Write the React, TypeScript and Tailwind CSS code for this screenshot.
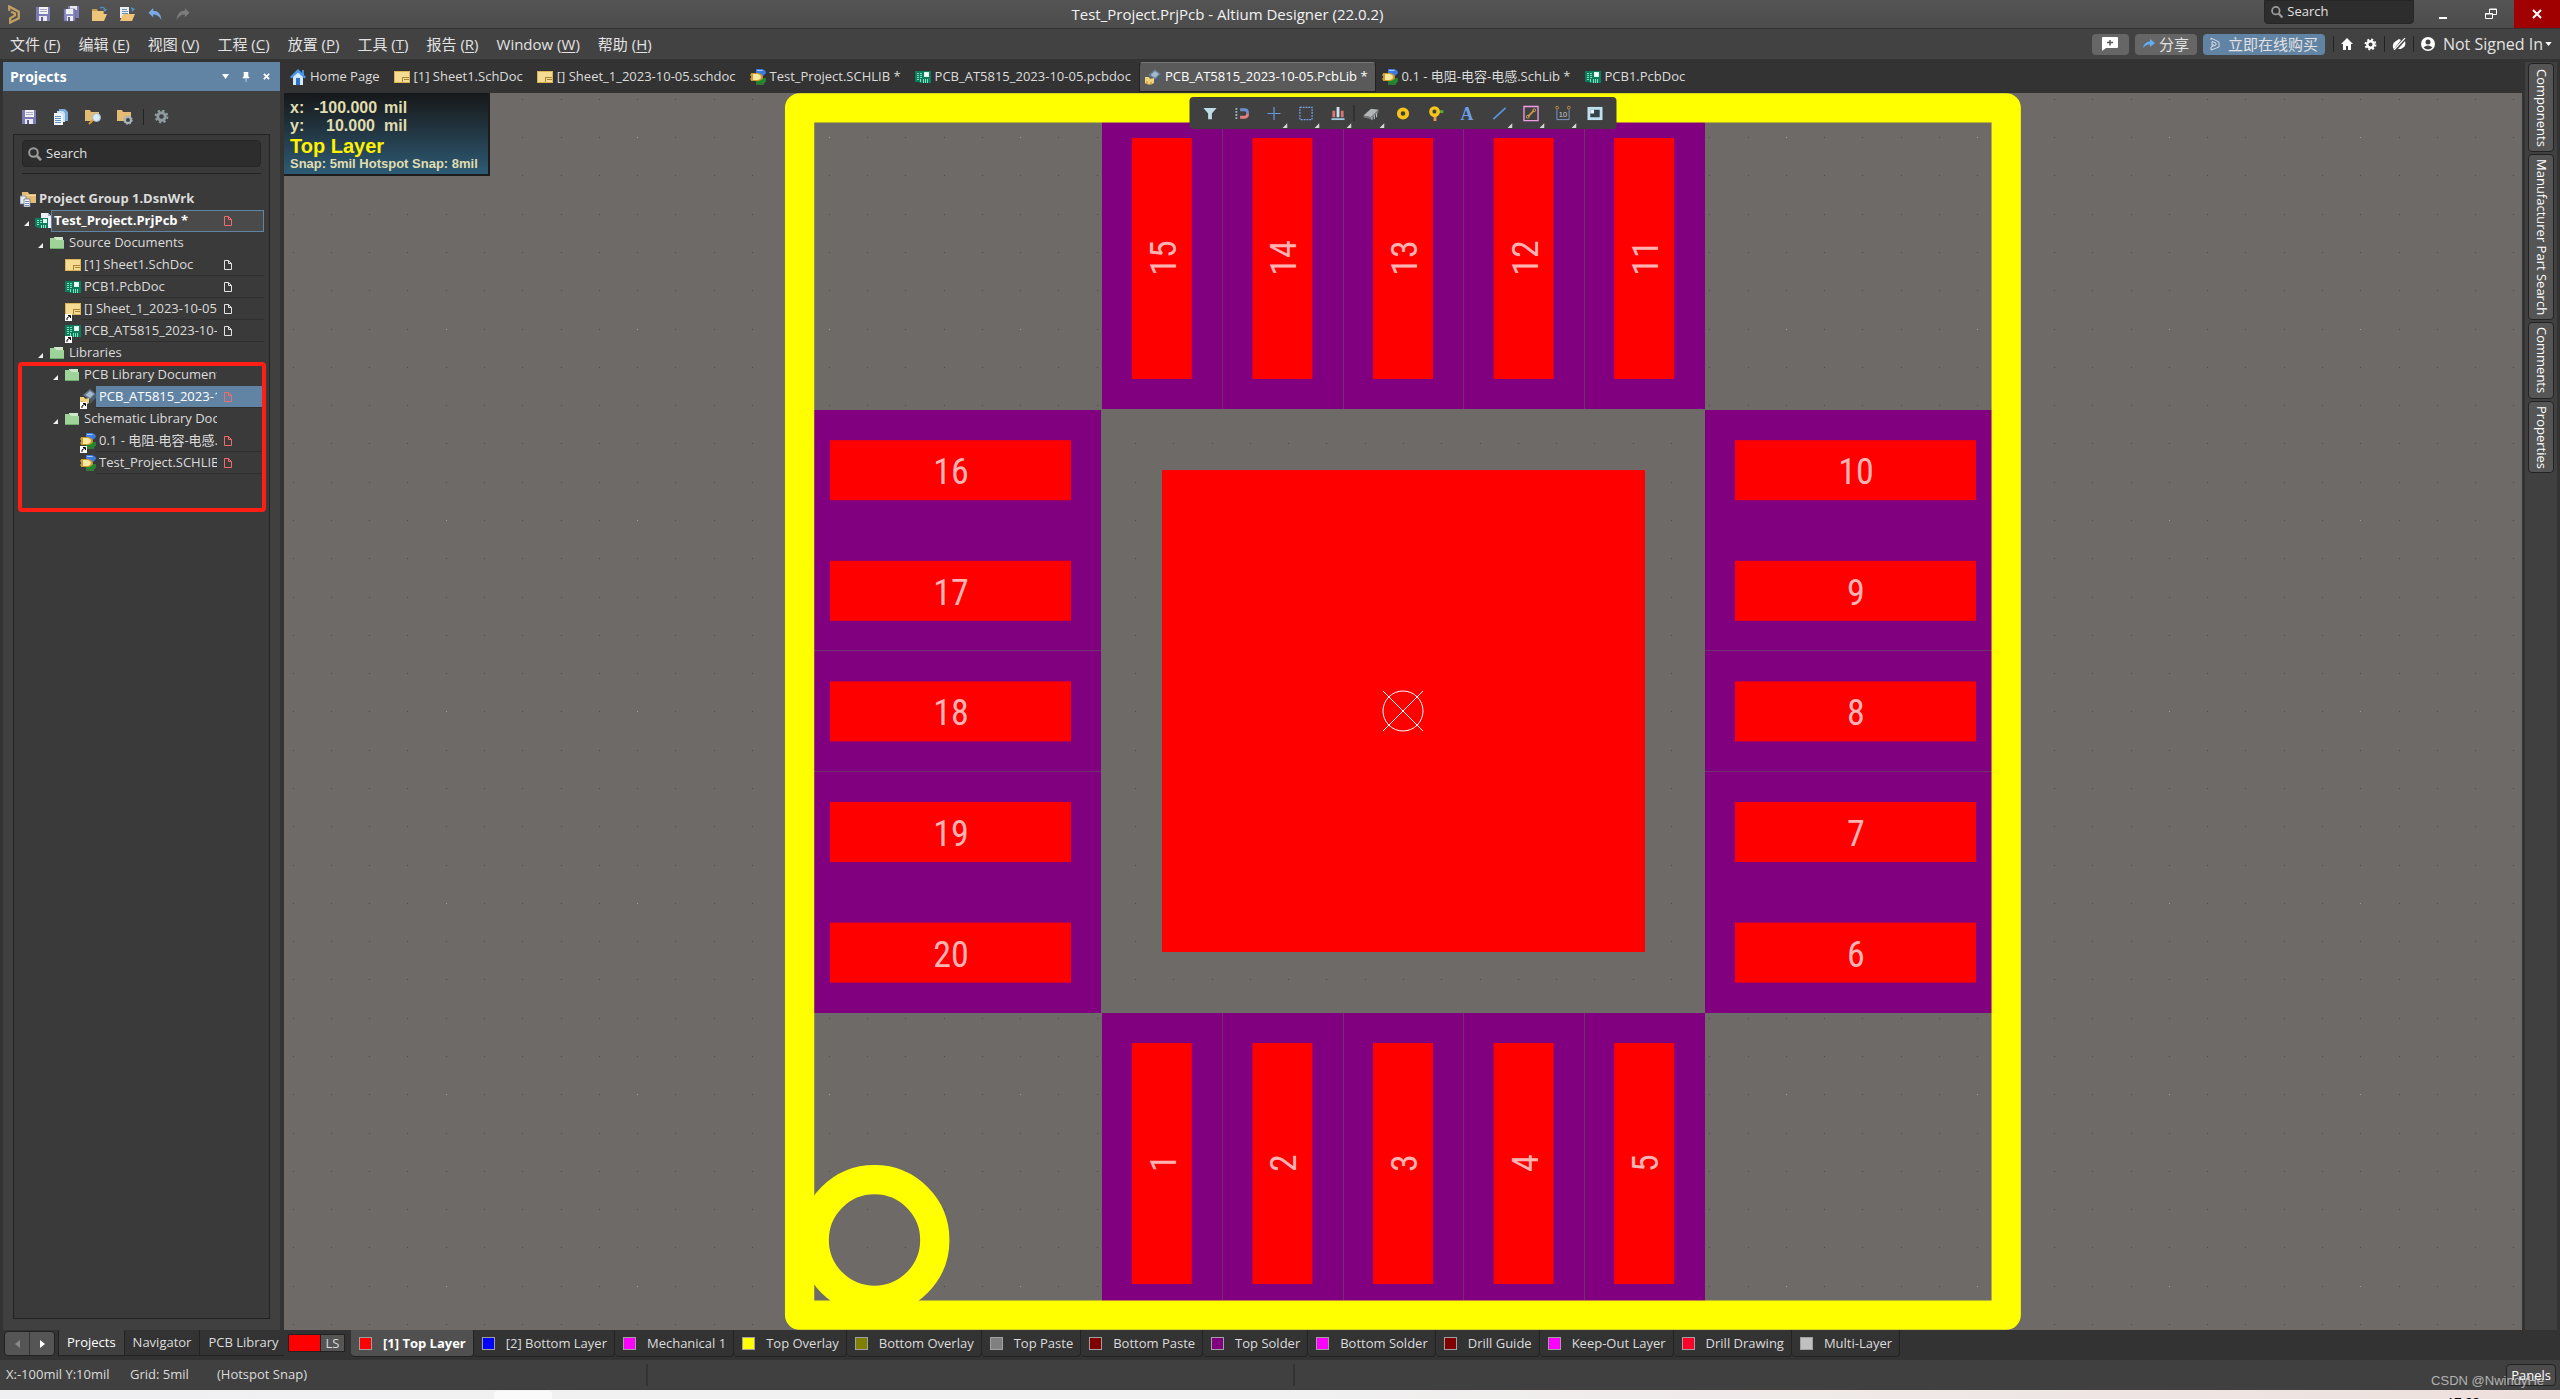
import React from 'react';

interface IconProps {
  className?: string;
}

type DocKind = 'home' | 'sch' | 'pcb' | 'pcblib' | 'schlib';

const FONT = "font-['Open_Sans','Noto_Sans_CJK_SC',sans-serif]";

/* ---------- icons ---------- */

const LogoIcon: React.FC<IconProps> = ({ className }) => (
  <svg viewBox="0 0 14 20" className={className} fill="none" stroke="#c3a062" strokeWidth="2.4">
    <path d="M2 6V1.500L12 7v7L3 18.500V14l5-3V9L4 7" />
  </svg>
);

const SaveIcon: React.FC<IconProps> = ({ className }) => (
  <svg viewBox="0 0 16 16" className={className}>
    <path d="M1 1h14v14H1z" fill="#7d7bb5" />
    <path d="M4 1h9v7H4z" fill="#f1f1f4" />
    <path d="M5 3h7v1H5zM5 5h7v1H5z" fill="#a6a8bd" />
    <path d="M4 10h8v5H4z" fill="#e8e8ee" />
    <path d="M6 11h2v4H6z" fill="#5c5a93" />
  </svg>
);

const SaveAllIcon: React.FC<IconProps> = ({ className }) => (
  <svg viewBox="0 0 16 16" className={className}>
    <path d="M5 0h11v12H5z" fill="#7d7bb5" />
    <path d="M7 0h7v4H7z" fill="#e8e8ee" />
    <path d="M1 3h11v12H1z" fill="#908ec6" stroke="#5c5a93" strokeWidth=".6" />
    <path d="M3 3h7v5H3zM4 10h6v5H4z" fill="#f1f1f4" />
    <path d="M5 11h2v4H5z" fill="#5c5a93" />
  </svg>
);

const OpenIcon: React.FC<IconProps> = ({ className }) => (
  <svg viewBox="0 0 16 16" className={className}>
    <path d="M1 3h5l1 2h6v3H1z" fill="#c99b4e" />
    <path d="M1 15V5h11v3h4l-3 7z" fill="#eec67a" />
    <path d="M9 2q4-2 5 2" fill="none" stroke="#4f93c4" strokeWidth="1.3" />
    <path d="M12 3l4 0-2 3z" fill="#4f93c4" />
  </svg>
);

const OpenDocsIcon: React.FC<IconProps> = ({ className }) => (
  <svg viewBox="0 0 16 16" className={className}>
    <path d="M1 1h9v11H1z" fill="#e9eef2" />
    <path d="M3 3h5v1H3zM3 5h6v1H3zM3 7h6v1H3z" fill="#6b93b4" />
    <path d="M1 15l3-7h12l-3 7z" fill="#f1c378" />
    <path d="M12 1l4 2-3 3z" fill="#4f93c4" />
  </svg>
);

const UndoIcon: React.FC<IconProps> = ({ className }) => (
  <svg viewBox="0 0 16 14" className={className}>
    <path d="M6 0v3q8 0 9 10-3-6-9-6v3L1 5z" fill="#7aa9e6" />
  </svg>
);

const RedoIcon: React.FC<IconProps> = ({ className }) => (
  <svg viewBox="0 0 16 14" className={className}>
    <path d="M10 0v3Q2 3 1 13q3-6 9-6v3l5-5z" fill="#7c7c7c" />
  </svg>
);

const HomeDocIcon: React.FC<IconProps> = ({ className }) => (
  <svg viewBox="0 0 16 16" className={className}>
    <path d="M3 7v9h10V7L8 3z" fill="#d5e9fb" />
    <path d="M12 1h2v5h-2z" fill="#3f8fe0" />
    <path d="M0 8l8-8 8 8-1.500 1.500L8 3.500 1.500 9.500z" fill="#4a9bf0" />
    <path d="M6 9h4v7H6z" fill="#2a74c4" />
  </svg>
);

const SchDocIcon: React.FC<IconProps> = ({ className }) => (
  <svg viewBox="0 0 16 16" className={className}>
    <path d="M0 2h16v12H0z" fill="#d9b557" />
    <path d="M1 3h14v10H1z" fill="#f5dc92" />
    <path d="M8 8h7v1H9v4H8z" fill="#a8842f" />
    <path d="M10 10h5v1h-5z" fill="#a8842f" />
  </svg>
);

const PcbDocIcon: React.FC<IconProps> = ({ className }) => (
  <svg viewBox="0 0 16 16" className={className}>
    <path d="M0 2h16v12H5l-1-1H0z" fill="#0f7d5c" />
    <path d="M9 3h5v5H9z" fill="#d8f3e8" />
    <path d="M10 4h3v3h-3z" fill="#f4fffa" />
    <path d="M2 4h2v1H2zM5 4h2v1H5zM2 6h2v1H2zM5 6h2v1H5zM2 8h2v1H2zM5 8h2v1H5zM2 10h2v1H2zM8 10h1v4H8zM10 10h1v4h-1zM12 10h1v4h-1zM5 10h1v3H5z" fill="#7fe0bd" />
  </svg>
);

const PcbLibIcon: React.FC<IconProps> = ({ className }) => (
  <svg viewBox="0 0 16 16" className={className}>
    <path d="M3 6l7-6 6 5-6 6z" fill="#61768a" />
    <path d="M5.500 6l4.500-4 4 3-4 4z" fill="#a3b8ca" />
    <path d="M10 11l6-6v4l-6 6z" fill="#4a5c6d" />
    <path d="M0 8h4q0 3 5 1v5q-5 3-9 0z" fill="#f0d27a" />
    <path d="M2 12v3M6 13v3" stroke="#b98c2a" />
  </svg>
);

const SchLibIcon: React.FC<IconProps> = ({ className }) => (
  <svg viewBox="0 0 16 16" className={className}>
    <path d="M6 9h9v5H6z" fill="#1f8a2b" />
    <path d="M7 14v2M9 14v2M11 14v2M13 14v2M15 10h1M15 12h1" stroke="#32b53f" />
    <path d="M6 0h6q4 1 4 4l-3 3H6z" fill="#3d7be0" />
    <path d="M7 1h4q2 0 2 1H7z" fill="#a9c9f7" />
    <path d="M1 4h7q5 1 5 4t-5 4H1z" fill="#c99b2f" />
    <path d="M3 5h5q3 1 3 3t-3 3H3z" fill="#fbe6a0" />
    <path d="M0 6h2M0 10h2" stroke="#d8b040" />
  </svg>
);

const FolderIcon: React.FC<IconProps> = ({ className }) => (
  <svg viewBox="0 0 14 12" className={className}>
    <path d="M4 0h9v3H4z" fill="#cfe8c8" />
    <path d="M0 1h5l1 2h8v9H0z" fill="#9ed49a" />
    <path d="M0 11h14v1H0z" fill="#6fae6c" />
  </svg>
);

const GroupIcon: React.FC<IconProps> = ({ className }) => (
  <svg viewBox="0 0 16 16" className={className}>
    <path d="M2 1h6l1 2h7v9H2z" fill="#e3bb73" />
    <path d="M2 4h14v1H2z" fill="#f6dba2" />
    <path d="M0 5h6v8H0z" fill="#e4e9f1" stroke="#6f7f98" strokeWidth=".8" />
    <path d="M4 8h6v8H4z" fill="#f4f6fa" stroke="#6f7f98" strokeWidth=".8" />
    <path d="M5 10h4v1H5zM5 12h4v1H5zM5 14h4v1H5z" fill="#6f8fb8" />
  </svg>
);

const ProjectIcon: React.FC<IconProps> = ({ className }) => (
  <svg viewBox="0 0 16 16" className={className}>
    <path d="M6 0h7l3 3v12H6z" fill="#eceff5" />
    <path d="M13 0v3h3z" fill="#a9b2c4" />
    <path d="M0 5h13v10H3l-1-1H0z" fill="#0f7d5c" />
    <path d="M8 6h4v4H8z" fill="#e6fff5" />
    <path d="M2 7h2v1H2zM5 7h2v1H5zM2 9h2v1H2zM5 9h2v1H5zM2 11h2v1H2zM6 12h1v3H6zM8 12h1v3H8zM10 12h1v3h-1z" fill="#8fe8c8" />
  </svg>
);

const DocFlag: React.FC<{ modified?: boolean }> = ({ modified }) => (
  <svg viewBox="0 0 8 10" className={`h-[10px] w-2 shrink-0 ${modified ? 'text-[#f26a6a]' : 'text-[#e4e4e4]'}`} fill="none" stroke="currentColor">
    <path d="M.5.5h4l3 3v6h-7zM4.500.5v3h3" />
  </svg>
);

const SearchIcon: React.FC<IconProps> = ({ className }) => (
  <svg viewBox="0 0 14 14" className={className} fill="none" stroke="#9b9b9b" strokeWidth="2">
    <circle cx="5.500" cy="5.500" r="4.300" />
    <path d="M9 9l4 4.200" strokeWidth="2.600" />
  </svg>
);

const GearIcon: React.FC<IconProps> = ({ className }) => (
  <svg viewBox="0 0 16 16" className={className} fill="none" stroke="currentColor">
    <circle cx="8" cy="8" r="4" strokeWidth="3" />
    <circle cx="8" cy="8" r="6.200" strokeWidth="2.200" strokeDasharray="2.500 2.370" />
  </svg>
);

const docIcons: Record<DocKind, React.FC<IconProps>> = {
  home: HomeDocIcon,
  sch: SchDocIcon,
  pcb: PcbDocIcon,
  pcblib: PcbLibIcon,
  schlib: SchLibIcon,
};

/* ---------- title bar and menu ---------- */

const TitleBar = () => (
  <header className="flex h-[29px] shrink-0 items-stretch border-b border-[#333] bg-gradient-to-b from-[#545454] to-[#4c4c4c]">
    <div className="flex items-center pl-[7px]">
      <LogoIcon className="h-[19px] w-[14px]" />
      <div className="ml-[14px] flex items-center gap-3">
        <button aria-label="Save"><SaveIcon className="size-4" /></button>
        <button aria-label="Save all"><SaveAllIcon className="size-4" /></button>
        <button aria-label="Open"><OpenIcon className="size-4" /></button>
        <button aria-label="Open document"><OpenDocsIcon className="size-4" /></button>
        <button aria-label="Undo"><UndoIcon className="h-[13px] w-4" /></button>
        <button aria-label="Redo"><RedoIcon className="h-[13px] w-4" /></button>
      </div>
    </div>
    <h1 className="flex-1 self-center text-center text-[15px] text-[#f2f2f2]">Test_Project.PrjPcb - Altium Designer (22.0.2)</h1>
    <label className="flex h-6 w-[150px] items-center gap-1 rounded-b border border-[#262626] bg-[#2d2d2d] px-1.5">
      <SearchIcon className="size-[14px]" />
      <input aria-label="Search" placeholder="Search" className="w-full bg-transparent text-[13px] text-[#e0e0e0] outline-none placeholder:text-[#e0e0e0]" />
    </label>
    <button aria-label="Minimize" className="ml-1 flex w-[50px] items-center justify-center">
      <svg viewBox="0 0 8 8" className="mt-2 size-2"><path d="M0 3h8v2H0z" fill="#fff" /></svg>
    </button>
    <button aria-label="Restore" className="flex w-[46px] items-center justify-center">
      <svg viewBox="0 0 12 12" className="size-3" fill="none" stroke="#fff"><path d="M4.500 5V1h7v5.500H8M4 1.500h8M.5 5.500h7v5h-7zM0 6h8" /></svg>
    </button>
    <button aria-label="Close" className="flex w-[46px] items-center justify-center bg-[#a00000]">
      <svg viewBox="0 0 10 10" className="size-[10px]" stroke="#fff" strokeWidth="2"><path d="M1 1l8 8M9 1L1 9" /></svg>
    </button>
  </header>
);

const menus = [
  ['文件', 'F'],
  ['编辑', 'E'],
  ['视图', 'V'],
  ['工程', 'C'],
  ['放置', 'P'],
  ['工具', 'T'],
  ['报告', 'R'],
  ['Window', 'W'],
  ['帮助', 'H'],
];

const Divider = () => <span className="h-4 w-px bg-[#222]" />;

const MenuBar = () => (
  <div className="flex h-[30px] shrink-0 items-center justify-between bg-[#424242] text-[15px] text-[#e2e2e2]">
    <nav className="flex gap-[18px] pl-[10px]">
      {menus.map(([label, key]) => (
        <button key={key}>{label} (<u className="underline-offset-2">{key}</u>)</button>
      ))}
    </nav>
    <div className="flex items-center pr-2">
      <button aria-label="Comment" className="flex h-[21px] w-[37px] items-center justify-center rounded-sm bg-[#666]">
        <svg viewBox="0 0 16 14" className="h-[14px] w-4"><path d="M1 0h14q1 0 1 1v9q0 1-1 1H4l-4 3V1q0-1 1-1z" fill="#fff" /><path d="M8 3v5.500M5 5.500h6" stroke="#555" strokeWidth="1.500" /></svg>
      </button>
      <button className="ml-1.5 flex h-[21px] w-[62px] items-center justify-center gap-1 rounded-sm bg-[#666]">
        <svg viewBox="0 0 12 10" className="h-[10px] w-3"><path d="M7 0l5 4-5 4V5.500Q3 5 0 9q1-6 7-6.500z" fill="#62aef5" /></svg>
        分享
      </button>
      <button className="ml-1.5 flex h-[21px] w-[122px] items-center justify-center gap-2 rounded-sm bg-[#6284a4]">
        <svg viewBox="0 0 10 14" className="h-[14px] w-[10px]" fill="none" stroke="#d6dde4"><path d="M1 3V1l8 4v5l-8 3v-3l5-2V6L2 4.500v4l2-1" /></svg>
        立即在线购买
      </button>
      <div className="flex items-center gap-[7px] pl-2 text-white">
        <Divider />
        <svg viewBox="0 0 12 12" className="size-3" fill="currentColor"><path d="M6 0l6 6h-2v6H7V8H5v4H2V6H0z" /></svg>
        <GearIcon className="ml-1 size-[13px]" />
        <Divider />
        <svg viewBox="0 0 14 12" className="h-3 w-[14px]"><path d="M1 10Q0 5 4 3l3-2 2 1-7 9z" fill="#fff" /><path d="M13 0L2 12" stroke="#fff" strokeWidth="1.200" /><path d="M6 11l7-8q1 4-1 6l-3 2z" fill="#fff" /></svg>
        <Divider />
        <svg viewBox="0 0 14 14" className="size-[14px]"><circle cx="7" cy="7" r="7" fill="#fff" /><circle cx="7" cy="5" r="2.500" fill="#424242" /><path d="M2.500 10.500q4.500-4 9 0-4.500 4-9 0z" fill="#424242" /></svg>
      </div>
      <button className="ml-2 flex items-center gap-0.5 text-base text-[#e2e2e2]">
        Not Signed In
        <svg viewBox="0 0 8 5" className="h-1 w-[7px]"><path d="M0 0h8L4 5z" fill="#fff" /></svg>
      </button>
    </div>
  </div>
);

/* ---------- projects panel ---------- */

interface TreeItem {
  label: string;
  kind: DocKind | 'folder';
  depth: 0 | 1 | 2;
  flag?: 'saved' | 'modified';
  linked?: boolean;
  selected?: boolean;
}

const treeItems: TreeItem[] = [
  { label: 'Source Documents', kind: 'folder', depth: 0 },
  { label: '[1] Sheet1.SchDoc', kind: 'sch', depth: 1, flag: 'saved' },
  { label: 'PCB1.PcbDoc', kind: 'pcb', depth: 1, flag: 'saved' },
  { label: '[] Sheet_1_2023-10-05.schdoc', kind: 'sch', depth: 1, flag: 'saved', linked: true },
  { label: 'PCB_AT5815_2023-10-05.pcbdoc', kind: 'pcb', depth: 1, flag: 'saved', linked: true },
  { label: 'Libraries', kind: 'folder', depth: 0 },
  { label: 'PCB Library Documents', kind: 'folder', depth: 1 },
  { label: 'PCB_AT5815_2023-10-05.PcbLib', kind: 'pcblib', depth: 2, flag: 'modified', linked: true, selected: true },
  { label: 'Schematic Library Documents', kind: 'folder', depth: 1 },
  { label: '0.1 - 电阻-电容-电感.SchLib', kind: 'schlib', depth: 2, flag: 'modified', linked: true },
  { label: 'Test_Project.SCHLIB', kind: 'schlib', depth: 2, flag: 'modified' },
];

const indent = ['pl-6', 'pl-[39px]', 'pl-[54px]'];

const Expander = () => (
  <svg viewBox="0 0 5 5" className="mt-1 size-[5px] shrink-0"><path d="M5 0v5H0z" fill="#eee" /></svg>
);

const TreeRow: React.FC<{ item: TreeItem }> = ({ item }) => {
  const Icon = item.kind === 'folder' ? FolderIcon : docIcons[item.kind];
  return (
    <li className={`flex h-[22px] items-center pr-[5px] ${indent[item.depth]}`}>
      <span className="flex w-3 shrink-0 items-center">{item.kind === 'folder' && <Expander />}</span>
      <span className="relative shrink-0">
        <Icon className={item.kind === 'folder' ? 'mr-0.5 h-3 w-[14px]' : 'size-4'} />
        {item.linked && (
          <svg viewBox="0 0 7 7" className="absolute -bottom-1 left-0 size-[7px]"><path d="M0 0h7v7H0z" fill="#fff" /><path d="M2 6V4l3-2M3 1.500h2.500V4" stroke="#000" fill="none" /></svg>
        )}
      </span>
      <button
        className={`flex h-full min-w-0 flex-1 items-center gap-[7px] pl-[3px] pr-8 text-left ${item.selected ? 'bg-[#6284a4] text-white' : ''} ${item.flag ? 'border-b border-[#2f2f2f]' : ''}`}
      >
        <span className="min-w-0 flex-1 overflow-hidden whitespace-nowrap">{item.label}</span>
        <span className="w-2 shrink-0">{item.flag && <DocFlag modified={item.flag === 'modified'} />}</span>
      </button>
    </li>
  );
};

const ProjectsPanel = () => (
  <aside className="flex w-[284px] shrink-0 flex-col pl-[3px] pr-1 pt-[3px]">
    <div className="flex h-[29px] shrink-0 items-center bg-[#6284a4] pl-[7px] pr-[10px] text-white">
      <h2 className="flex-1 text-sm font-bold">Projects</h2>
      <div className="flex items-center gap-[13px]">
        <svg viewBox="0 0 7 5" className="h-[5px] w-[7px]"><path d="M0 0h7L3.500 5z" fill="#fff" /></svg>
        <svg viewBox="0 0 8 10" className="h-[10px] w-2"><path d="M2 0h4v5h1v1H1V5h1zM4 6v4" fill="#fff" stroke="#fff" strokeWidth=".6" /></svg>
        <svg viewBox="0 0 8 8" className="size-[7px]" stroke="#fff" strokeWidth="2"><path d="M1 1l6 6M7 1L1 7" /></svg>
      </div>
    </div>
    <div className="flex min-h-0 flex-1 flex-col bg-[#404040] px-[10px] pb-[11px]">
      <div className="flex h-[43px] shrink-0 items-center pl-2 pt-2">
        <button aria-label="Save" className="mr-4"><SaveIcon className="size-4" /></button>
        <button aria-label="Copy documents" className="mr-4">
          <svg viewBox="0 0 16 16" className="size-4"><path d="M6 0h6l3 3v9H6z" fill="#79a9d8" /><path d="M4 2h6l2 2v9H4z" fill="#c8dff2" /><path d="M1 4h7l2 2v10H1z" fill="#f1f6fb" /><path d="M2 7h6v1H2zM2 9h6v1H2zM2 11h6v1H2zM2 13h6v1H2z" fill="#5b8dc0" /></svg>
        </button>
        <button aria-label="Find in project" className="mr-4">
          <svg viewBox="0 0 16 16" className="size-4"><path d="M0 1h5l1 2h8v9H0z" fill="#e3bb73" /><path d="M9 10l-5 5" stroke="#e09a30" strokeWidth="2" /><circle cx="11.500" cy="8.500" r="4" fill="#d7ebf7" stroke="#a5b8c4" /></svg>
        </button>
        <button aria-label="Project settings">
          <svg viewBox="0 0 16 16" className="size-4 text-[#a9b7bd]"><path d="M0 1h5l1 2h8v9H0z" fill="#e3bb73" /><circle cx="11" cy="11" r="3" fill="#404040" stroke="currentColor" strokeWidth="2" /><circle cx="11" cy="11" r="4.300" fill="none" stroke="currentColor" strokeDasharray="1.700 1.700" /></svg>
        </button>
        <span className="mx-[10px] h-4 w-px bg-[#222]" />
        <button aria-label="Options"><GearIcon className="size-[15px] text-[#8e9ba0]" /></button>
      </div>
      <div className="relative min-h-0 flex-1 border border-[#222] bg-[#3a3a3a]">
        <div className="mx-2 mb-[14px] border-b border-[#222] pb-[6px] pt-[5px]">
          <label className="flex h-[27px] items-center gap-1 rounded border border-[#262626] bg-[#2d2d2d] px-[5px]">
            <SearchIcon className="size-[14px] shrink-0" />
            <input aria-label="Search projects" placeholder="Search" className="w-full bg-transparent outline-none placeholder:text-[#e0e0e0]" />
          </label>
        </div>
        <button className="flex h-[22px] items-center gap-[3px] pl-[6px] font-bold"><GroupIcon className="size-4" />Project Group 1.DsnWrk</button>
        <div className="flex h-[22px] items-center pl-[10px] pr-[5px]">
          <span className="flex w-[11px]"><Expander /></span>
          <ProjectIcon className="size-4 shrink-0" />
          <button className="flex h-full flex-1 items-center border border-[#6284a4] bg-[#4a4a4a] pl-0.5 pr-[31px] font-bold text-white">
            <span className="flex-1 text-left">Test_Project.PrjPcb *</span>
            <DocFlag modified />
          </button>
        </div>
        <ul>
          {treeItems.map(item => <TreeRow key={item.label} item={item} />)}
        </ul>
        <div className="pointer-events-none absolute left-1 top-[227px] h-[150px] w-[248px] rounded border-4 border-[#ff1f14]" />
      </div>
    </div>
  </aside>
);

/* ---------- document area ---------- */

const docTabs: { label: string; kind: DocKind; active?: boolean }[] = [
  { label: 'Home Page', kind: 'home' },
  { label: '[1] Sheet1.SchDoc', kind: 'sch' },
  { label: '[] Sheet_1_2023-10-05.schdoc', kind: 'sch' },
  { label: 'Test_Project.SCHLIB *', kind: 'schlib' },
  { label: 'PCB_AT5815_2023-10-05.pcbdoc', kind: 'pcb' },
  { label: 'PCB_AT5815_2023-10-05.PcbLib *', kind: 'pcblib', active: true },
  { label: '0.1 - 电阻-电容-电感.SchLib *', kind: 'schlib' },
  { label: 'PCB1.PcbDoc', kind: 'pcb' },
];

const DocTabs = () => (
  <div className="flex h-[34px] shrink-0 items-end pb-px">
    {docTabs.map(tab => {
      const Icon = docIcons[tab.kind];
      return (
        <button
          key={tab.label}
          className={`flex h-[30px] items-center gap-1 whitespace-nowrap rounded-t border px-[5px] ${tab.active ? 'border-[#222] border-t-[#777] bg-[#5a5a5a] pr-[7px] text-white' : 'border-transparent pr-[7px]'}`}
        >
          <Icon className="size-4" />
          {tab.label}
        </button>
      );
    })}
  </div>
);

const PITCH = 120.6;
const CX = 1403;
const CY = 711.4;
const GRID = 38.29;

const gridPath = (major: boolean) => {
  let d = '';
  for (let i = -29; i <= 29; i++) {
    for (let j = -16; j <= 16; j++) {
      if ((i % 5 === 0 && j % 5 === 0) !== major) continue;
      d += `M${Math.round(CX + i * GRID)} ${Math.round(CY + j * GRID)}h1v1h-1z`;
    }
  }
  return d;
};

const offsets = [-2, -1, 0, 1, 2];

const VerticalPad: React.FC<{ n: number; slot: number; y: number }> = ({ n, slot, y }) => {
  const x = CX + slot * PITCH;
  return (
    <g>
      <rect x={x - 30} y={y} width="60" height="241" fill="#f00" />
      <text transform={`translate(${x + 14} ${y + 120}) rotate(-90)`} textAnchor="middle">{n}</text>
    </g>
  );
};

const HorizontalPad: React.FC<{ n: number; slot: number; x: number }> = ({ n, slot, x }) => {
  const y = CY + slot * PITCH;
  return (
    <g>
      <rect x={x} y={y - 30} width="241" height="60" fill="#f00" />
      <text x={x + 121} y={y + 14} textAnchor="middle">{n}</text>
    </g>
  );
};

const Footprint = () => (
  <svg viewBox="284 93 2238 1237" preserveAspectRatio="xMidYMid slice" className="block size-full" shapeRendering="crispEdges">
    <rect x="284" y="93" width="2238" height="1237" fill="#6e6a68" />
    <path d={gridPath(false)} fill="#4c4858" />
    <path d={gridPath(true)} fill="#a19d9b" />
    <g fill="#800080">
      <rect x="1102" y="122" width="603" height="287" />
      <rect x="1102" y="1013" width="603" height="288" />
      <rect x="814" y="410" width="287" height="603" />
      <rect x="1705" y="410" width="287" height="603" />
    </g>
    <g stroke="#703070">
      <path d="M1222.500 122v287M1343.500 122v287M1463.500 122v287M1584.500 122v287M1222.500 1013v287M1343.500 1013v287M1463.500 1013v287M1584.500 1013v287" />
      <path d="M814 650.500h287M814 771.500h287M1705 650.500h287M1705 771.500h287" />
    </g>
    <g fill="#ffb3b3" fontSize="36" fontFamily="'Roboto Condensed', 'Liberation Sans Narrow', 'Liberation Sans', sans-serif" shapeRendering="auto">
      {offsets.map((slot, i) => (
        <React.Fragment key={slot}>
          <VerticalPad n={15 - i} slot={slot} y={138} />
          <VerticalPad n={i + 1} slot={slot} y={1043} />
          <HorizontalPad n={16 + i} slot={slot} x={830} />
          <HorizontalPad n={10 - i} slot={slot} x={1735} />
        </React.Fragment>
      ))}
    </g>
    <rect x="1162" y="470" width="483" height="482" fill="#f00" />
    <g fill="none" stroke="#fff" shapeRendering="auto">
      <circle cx="1403" cy="711" r="20" />
      <path d="M1383 691l40 40M1423 691l-40 40" />
    </g>
    <g fill="none" stroke="#ff0" strokeWidth="29.300" shapeRendering="auto">
      <circle cx="874.500" cy="1240" r="60.300" />
      <rect x="799.600" y="107.900" width="1206.600" height="1207.200" strokeLinejoin="round" />
    </g>
  </svg>
);

const tools: { name: string; menu?: boolean; art: React.ReactNode }[] = [
  { name: 'Filter', art: <path d="M1 2h14l-5 6v6H6V8z" fill="#bfdde8" /> },
  { name: 'Snap', art: <g fill="none" strokeWidth="3"><path d="M6 4h5q3 0 3 4" stroke="#6d8fd0" /><path d="M14 8q0 4-3 4H6" stroke="#e08080" /><path d="M2 2v12" stroke="#9cb3bd" strokeWidth="2" strokeDasharray="2 1.300" /></g> },
  { name: 'Move', menu: true, art: <path d="M8 1v14M1 8h14" stroke="#6b95dc" strokeWidth="1.300" /> },
  { name: 'Select', menu: true, art: <path d="M1.500 1.500h13v13h-13z" fill="none" stroke="#7ba3ea" strokeWidth="1.200" strokeDasharray="2 1" /> },
  { name: 'Align', menu: true, art: <g><path d="M2 5h3v7H2zM11 5h3v7h-3z" fill="#d97575" /><path d="M6.500 1h3v11h-3z" fill="#cfe3ee" /><path d="M1 13h14v2H1z" fill="#9cc5de" /></g> },
  { name: 'Component', menu: true, art: <g><path d="M0 10l8-7 8 1-8 8z" fill="#b3b6b8" /><path d="M8 12l8-8v3l-8 7zM0 10l8 2v2l-8-2z" fill="#777c80" /><path d="M9 12v3M11.500 10v4M14 8v4" stroke="#c9d5dc" /></g> },
  { name: 'Pad', art: <circle cx="8" cy="8" r="4.500" fill="none" stroke="#f5c518" strokeWidth="4" /> },
  { name: 'Via', art: <g><path d="M8 8v8" stroke="#e39b58" strokeWidth="3" /><path d="M9 6h8" stroke="#56a83c" strokeWidth="3" /><circle cx="7.500" cy="6" r="4" fill="none" stroke="#f5c518" strokeWidth="3.500" /></g> },
  { name: 'String', art: <text x="8" y="15" textAnchor="middle" fontSize="19" fontWeight="bold" fontFamily="'Liberation Serif', serif" fill="#6ba0e8">A</text> },
  { name: 'Line', menu: true, art: <path d="M2 14L15 2" stroke="#5a95e0" strokeWidth="1.800" /> },
  { name: 'Dimension', menu: true, art: <g fill="none"><path d="M.5.5h15v15H.5z" stroke="#f29be6" strokeWidth="1.400" /><path d="M5 11l6-6" stroke="#c8954a" strokeWidth="2" /><circle cx="4.500" cy="11.500" r="1.500" stroke="#d9a85a" /><circle cx="11.500" cy="4.500" r="1.500" stroke="#d9a85a" /></g> },
  { name: 'Coordinate', menu: true, art: <g fill="none"><path d="M1.500 4v10.500h13V4" stroke="#7f9bc8" /><circle cx="1.800" cy="1.800" r="1.500" stroke="#c8954a" /><circle cx="14.200" cy="1.800" r="1.500" stroke="#c8954a" /><text x="8" y="12" textAnchor="middle" fontSize="8" fontFamily="'Liberation Sans', sans-serif" fill="#ccc">10</text></g> },
  { name: 'Region', art: <g><path d="M0 1h16v14H0z" fill="#bfe0ee" /><path d="M3 4h10v8H3z" fill="#34424a" /><path d="M3 4h4v4H3z" fill="#e6f4fa" /></g> },
];

const ToolStrip = () => (
  <div className="absolute left-1/2 top-1 flex h-8 -translate-x-1/2 items-center rounded bg-[#404040] pl-1 pr-1.5">
    {tools.map(tool => (
      <React.Fragment key={tool.name}>
        {tool.name === 'Component' && <span className="h-4 w-px bg-[#222]" />}
        <button aria-label={tool.name} className="relative flex size-8 items-center justify-center">
          <svg viewBox="0 0 16 16" className="size-[15px] overflow-visible">{tool.art}</svg>
          {tool.menu && <svg viewBox="0 0 5 5" className="absolute bottom-px right-0.5 size-[5px]"><path d="M5 0v5H0z" fill="#d8d8d8" /></svg>}
        </button>
      </React.Fragment>
    ))}
  </div>
);

const HeadsUp = () => (
  <div className="absolute left-0 top-0 h-[83px] w-[206px] border-b-2 border-r-2 border-[#1c1c1c] bg-gradient-to-b from-[#161819] to-[#2c5b75] pl-[6px] pt-[6px] font-['Liberation_Sans',sans-serif] font-bold text-[#e0ddb0]">
    <div className="grid grid-cols-[24px_64px_auto] text-base leading-[18px]">
      <span>x:</span><span>-100.000</span><span className="pl-1.5">mil</span>
      <span>y:</span><span className="pl-3">10.000</span><span className="pl-1.5">mil</span>
    </div>
    <div className="text-xl leading-[22px] text-[#fff200]">Top Layer</div>
    <div className="whitespace-nowrap text-[13px] leading-[14px]">Snap: 5mil Hotspot Snap: 8mil</div>
  </div>
);

const sideTabs = [
  { label: 'Components', size: 'h-[89px]' },
  { label: 'Manufacturer Part Search', size: 'h-[166px]' },
  { label: 'Comments', size: 'h-[77px]' },
  { label: 'Properties', size: 'h-[72px]' },
];

const SideTabs = () => (
  <div className="ml-[3px] mr-[3px] mt-[3px] flex w-8 shrink-0 flex-col items-center gap-0.5 bg-[#404040] pt-px">
    {sideTabs.map(tab => (
      <button key={tab.label} className={`flex w-[26px] items-center justify-center whitespace-nowrap rounded border border-[#222] bg-[#555] text-[13px] text-white [writing-mode:vertical-rl] ${tab.size}`}>
        {tab.label}
      </button>
    ))}
  </div>
);

/* ---------- bottom bars ---------- */

const layers = [
  { label: '[1] Top Layer', color: 'bg-[#ff0000]', active: true },
  { label: '[2] Bottom Layer', color: 'bg-[#0000ff]' },
  { label: 'Mechanical 1', color: 'bg-[#ff00ff]' },
  { label: 'Top Overlay', color: 'bg-[#ffff00]' },
  { label: 'Bottom Overlay', color: 'bg-[#808000]' },
  { label: 'Top Paste', color: 'bg-[#808080]' },
  { label: 'Bottom Paste', color: 'bg-[#800000]' },
  { label: 'Top Solder', color: 'bg-[#800080]' },
  { label: 'Bottom Solder', color: 'bg-[#ff00ff]' },
  { label: 'Drill Guide', color: 'bg-[#800000]' },
  { label: 'Keep-Out Layer', color: 'bg-[#ff00ff]' },
  { label: 'Drill Drawing', color: 'bg-[#ff002a]' },
  { label: 'Multi-Layer', color: 'bg-[#c0c0c0]' },
];

const BottomTabs = () => (
  <div className="flex h-[30px] shrink-0 items-start whitespace-nowrap bg-[#333]">
    <div className="flex w-[284px] shrink-0 overflow-hidden pl-1">
      <div className="mt-px flex h-[25px] w-[51px] shrink-0 rounded-sm border border-[#222] bg-[#555]">
        <button aria-label="Previous" className="flex flex-1 items-center justify-center border-r border-[#333]"><svg viewBox="0 0 5 8" className="h-2 w-[5px]"><path d="M5 0v8L0 4z" fill="#8a8a8a" /></svg></button>
        <button aria-label="Next" className="flex flex-1 items-center justify-center"><svg viewBox="0 0 5 8" className="h-2 w-[5px]"><path d="M0 0v8l5-4z" fill="#fff" /></svg></button>
      </div>
      <button className="ml-[3px] h-[26px] border border-t-0 border-[#222] bg-[#404040] px-2 text-white">Projects</button>
      <button className="h-[26px] border-b border-r border-[#222] px-2">Navigator</button>
      <button className="h-[26px] border-b border-[#222] px-2">PCB Library</button>
    </div>
    <button className="mx-1 mt-1 flex h-[18px] w-[57px] items-center border border-[#222] bg-[#404040]">
      <span className="h-4 w-8 border-r border-[#222] bg-[#ff0000]" />
      <span className="flex-1 bg-[#555] text-[13px] leading-4">LS</span>
    </button>
    <div className="ml-0.5 flex">
      {layers.map(layer => (
        <button
          key={layer.label}
          className={`flex h-[27px] items-center gap-[11px] rounded-b-sm border-b border-r border-[#222] pl-2 pr-[7px] pt-px ${layer.active ? 'bg-[#505050] font-bold text-white' : ''}`}
        >
          <span className={`size-[13px] border border-[#a0a0a0] ${layer.color}`} />
          {layer.label}
        </button>
      ))}
    </div>
  </div>
);

const StatusBar = () => (
  <footer className="relative flex h-[30px] shrink-0 items-center bg-[#404040]">
    <div className="flex h-[22px] w-[648px] items-center border-r-2 border-[#333] pl-1.5">
      <span className="w-[124px]">X:-100mil Y:10mil</span>
      <span className="w-[87px]">Grid: 5mil</span>
      <span>(Hotspot Snap)</span>
    </div>
    <div className="h-[22px] w-[647px] border-r-2 border-[#333]" />
    <button className="ml-auto mr-1 h-[22px] rounded border border-[#222] bg-[#4c4c4c] px-1 text-[13px] leading-5 text-white">Panels</button>
    <span className="absolute right-4 top-[13px] font-['Liberation_Sans',sans-serif] text-[13px] leading-4 text-white/60">CSDN @NwindyHe</span>
  </footer>
);

const Taskbar = () => (
  <div className="flex h-[9px] shrink-0 items-start justify-between overflow-hidden bg-gradient-to-r from-[#f0f0f2] via-[#f1f1f1] to-[#eddfdc] pr-20">
    <span className="ml-[494px] mt-px h-4 w-[58px] rounded bg-[#fafafa]" />
    <span className="pt-1 text-[13px] leading-4 text-black">17:22</span>
  </div>
);

const App = () => (
  <div className={`flex h-screen flex-col overflow-hidden bg-[#333] text-[13px] text-[#dcdcdc] ${FONT}`}>
    <TitleBar />
    <MenuBar />
    <main className="flex min-h-0 flex-1">
      <ProjectsPanel />
      <section className="flex min-w-0 flex-1 flex-col">
        <DocTabs />
        <div className="relative min-h-0 flex-1">
          <Footprint />
          <HeadsUp />
          <ToolStrip />
        </div>
      </section>
      <SideTabs />
    </main>
    <BottomTabs />
    <StatusBar />
    <Taskbar />
  </div>
);

export default App;
